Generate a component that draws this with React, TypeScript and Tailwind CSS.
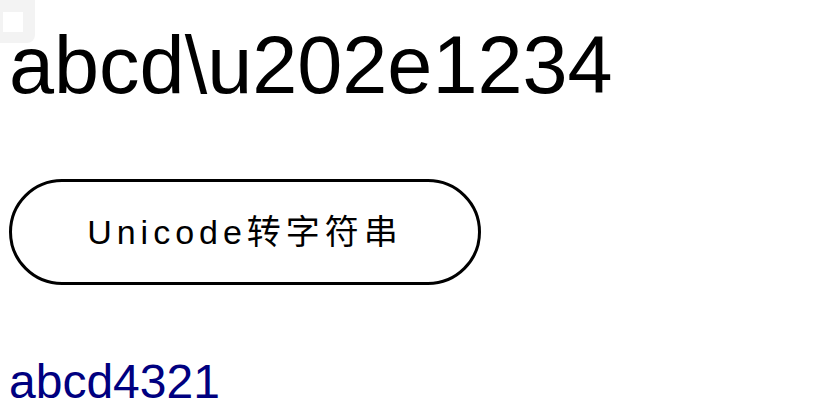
import React from "react";

const ENCODED = "abcd\\u202e1234";

export default function App() {
  const [result, setResult] = React.useState<string>("abcd4321");

  // \u202e is the right-to-left override, so the digits come out reversed
  const convert = () => {
    const decoded = ENCODED.replace(/\\u([0-9a-fA-F]{4})/g, (_, hex) =>
      String.fromCharCode(parseInt(hex, 16))
    );
    const [head, tail = ""] = decoded.split("\u202e");
    setResult(head + tail.split("").reverse().join(""));
  };

  return (
    <main
      className="relative w-[820px] h-[420px] overflow-hidden bg-white"
      style={{ fontFamily: '"Liberation Sans", Arial, sans-serif' }}
    >
      <div className="absolute top-0 left-0 w-[35px] h-[43px] bg-[#f3f3f3] rounded-br-lg">
        <div className="absolute left-[3px] top-[12px] w-5 h-5 bg-white" />
      </div>

      <div className="flex flex-col items-start gap-[73px] pt-[25px] pl-[9px]">
        <h1 className="text-[81px] leading-none font-normal text-black">
          {ENCODED}
        </h1>

        <button
          onClick={convert}
          className="w-[472px] h-[106px] rounded-full border-[3px] border-black bg-white flex items-center justify-center text-[34px] tracking-[5px] text-black"
          style={{
            fontFamily: '"Liberation Sans", "Noto Sans CJK SC", sans-serif',
          }}
        >
          Unicode转字符串
        </button>

        <div className="text-[48px] leading-none text-[#000080]">{result}</div>
      </div>
    </main>
  );
}
